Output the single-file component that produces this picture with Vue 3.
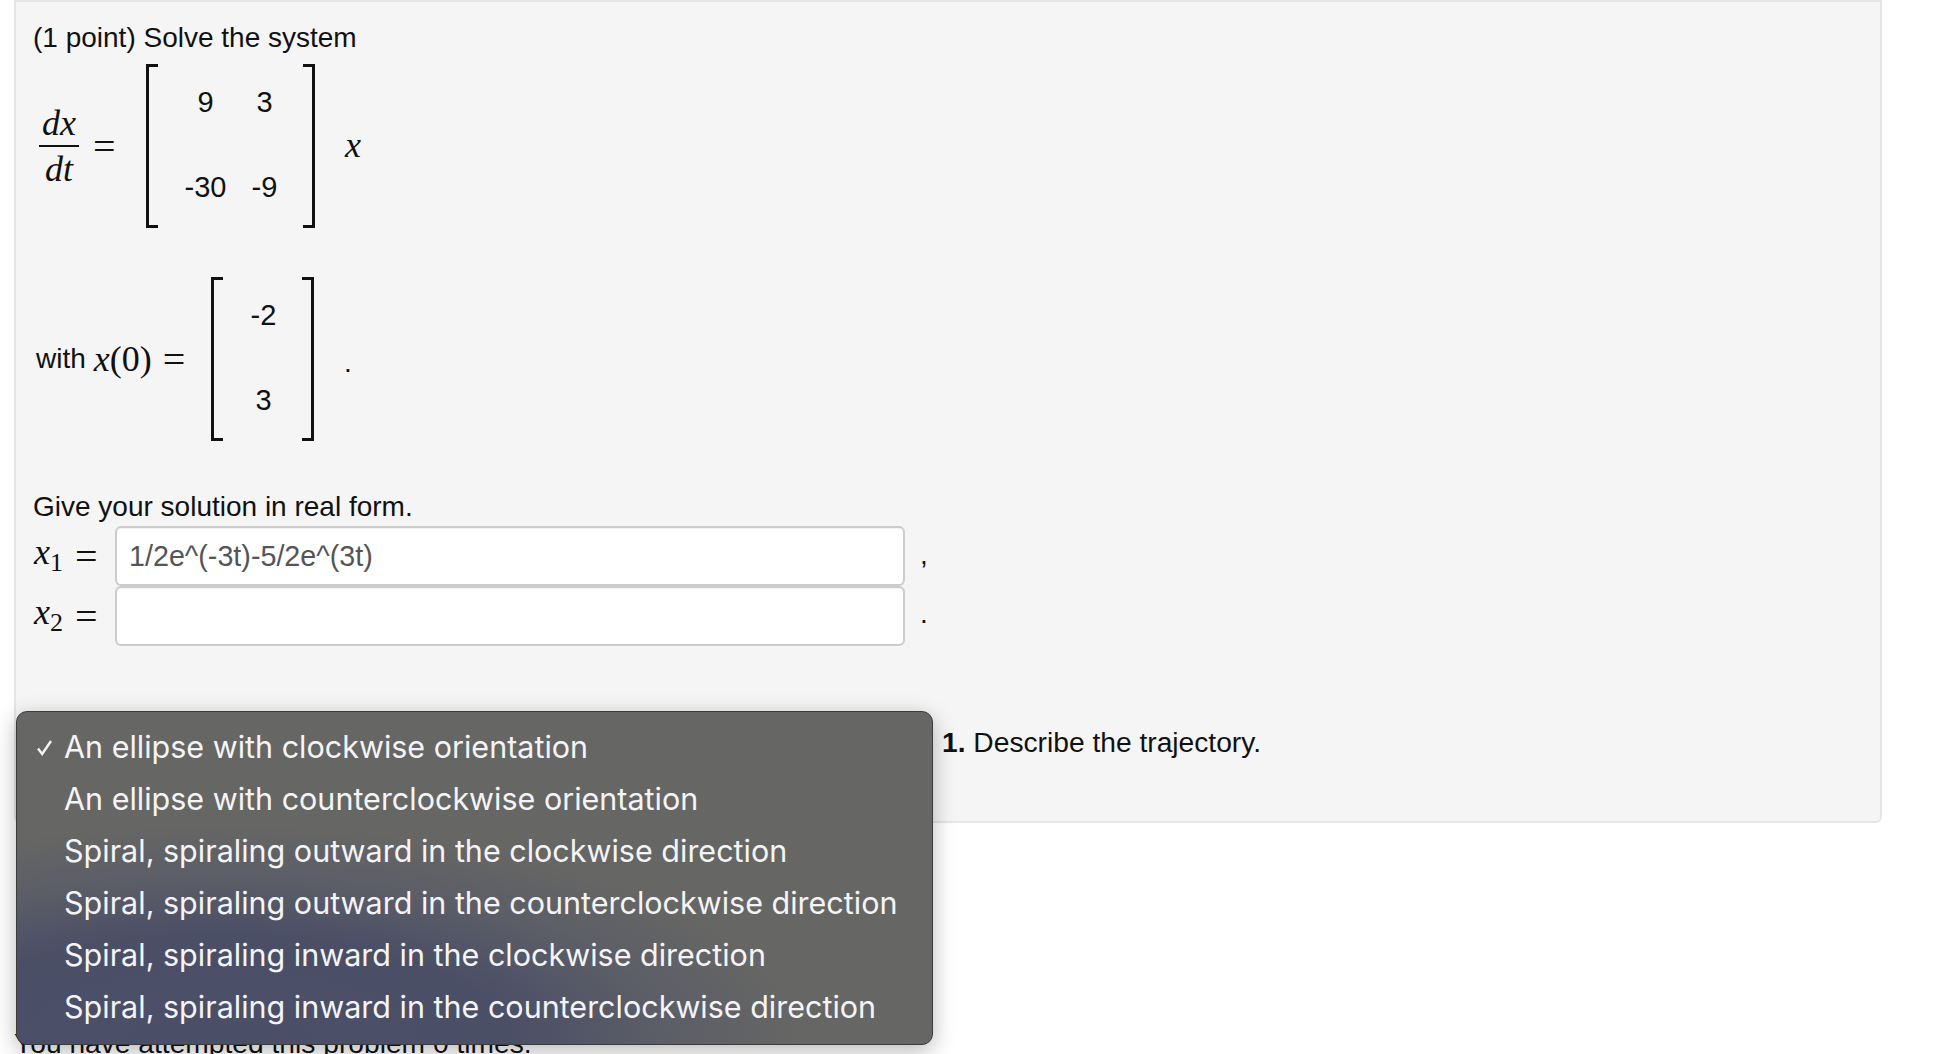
<script setup>
const options = [
  'An ellipse with clockwise orientation',
  'An ellipse with counterclockwise orientation',
  'Spiral, spiraling outward in the clockwise direction',
  'Spiral, spiraling outward in the counterclockwise direction',
  'Spiral, spiraling inward in the clockwise direction',
  'Spiral, spiraling inward in the counterclockwise direction'
]
</script>

<template>
  <div class="page">
    <section class="panel">
      <p class="title">(1 point) Solve the system</p>

      <div class="eq eq-one">
        <div class="frac">
          <span class="m num">dx</span>
          <span class="m den">dt</span>
        </div>
        <span class="m up big first-eq">=</span>
        <div class="matrix two">
          <span>9</span><span>3</span>
          <span>-30</span><span>-9</span>
        </div>
        <span class="m tail-x">x</span>
      </div>

      <div class="eq eq-two">
        <div class="with">
          <span class="with-word">with</span>
          <span class="m">x</span><span class="m up">(0)</span>
          <span class="m up big eq-gap">=</span>
        </div>
        <div class="matrix one">
          <span>-2</span>
          <span>3</span>
        </div>
        <span class="dot">.</span>
      </div>

      <p class="give">Give your solution in real form.</p>

      <div class="answer a1">
        <span class="lab"><span class="m">x</span><sub>1</sub></span>
        <span class="m up big lab-eq">=</span>
        <div class="field">1/2e^(-3t)-5/2e^(3t)</div>
        <span class="after comma">,</span>
      </div>
      <div class="answer">
        <span class="lab"><span class="m">x</span><sub>2</sub></span>
        <span class="m up big lab-eq">=</span>
        <div class="field"></div>
        <span class="after period">.</span>
      </div>

      <div class="describe">
        <div class="menu">
          <div v-for="(o, i) in options" :key="o" class="item">
            <span class="check">
              <svg v-if="i === 0" width="17" height="17" viewBox="0 0 17 17"><path d="M2 9.5 L6.2 15 L15 2" fill="none" stroke="#f4f4f6" stroke-width="2.4"/></svg>
            </span>{{ o }}
          </div>
        </div>
        <span class="desc"><b>1.</b> Describe the trajectory.</span>
      </div>
    </section>
    <p class="attempts">You have attempted this problem 0 times.</p>
  </div>
</template>

<style>
html, body { margin: 0; background: #fff; overflow: hidden; }
</style>

<style scoped>
.page {
  width: 1950px;
  height: 1054px;
  overflow: hidden;
  font-family: "Liberation Sans", Arial, sans-serif;
  font-size: 28px;
  color: #111;
}
.panel {
  box-sizing: border-box;
  width: 1868px;
  height: 823px;
  margin-left: 14px;
  padding: 0 0 0 18px;
  background: #f5f5f5;
  border: 2px solid #e6e6e6;
  border-radius: 0 0 6px 6px;
}
p { margin: 0; }
.title { padding-top: 20px; line-height: 32px; margin-left: -1px; }
.m { font-family: "Liberation Serif", "Times New Roman", serif; font-style: italic; font-size: 36px; }
.up { font-style: normal; }
.big { font-size: 40px; }
.eq { display: flex; align-items: center; }
.eq-one { height: 166px; margin-top: 9px; }
.frac { display: flex; flex-direction: column; align-items: center; width: 40px; margin-left: 5px; }
.num { line-height: 44px; border-bottom: 2px solid #111; width: 100%; text-align: center; }
.den { line-height: 44px; }
.first-eq { margin-left: 14px; width: 53px; }
.matrix {
  box-sizing: border-box;
  display: grid;
  align-items: center;
  justify-items: center;
  position: relative;
  height: 164px;
  width: 169px;
  padding-bottom: 2px;
  grid-auto-rows: 85px;
  align-content: center;
  font-size: 29px;
}
.matrix::before, .matrix::after {
  content: "";
  position: absolute;
  top: 0;
  bottom: 0;
  width: 9px;
  border: 3px solid #111;
}
.matrix::before { left: 0; border-right: 0; }
.matrix::after { right: 0; border-left: 0; }
.two { grid-template-columns: 59px 59px; justify-content: center; padding-left: 9px; }
.one { width: 103px; grid-template-columns: 59px; justify-content: end; padding-right: 21px; }
.tail-x { margin-left: 30px; margin-top: -2px; }
.eq-two { height: 164px; margin-top: 48px; }
.with { display: flex; align-items: center; width: 175px; margin-left: 2px; white-space: nowrap; }
.with-word { margin-right: 8px; }
.eq-gap { margin-left: 11px; }
.dot { margin-left: 30px; margin-top: 8px; }
.give { margin-top: 50px; line-height: 32px; margin-left: -1px; }
.answer { display: flex; align-items: center; height: 60px; position: relative; }
.a1 { margin-top: 3px; }
.lab { width: 41px; margin-top: -8px; white-space: nowrap; }
.lab sub { font-family: "Liberation Serif", serif; font-size: 26px; line-height: 0; vertical-align: -7px; }
.lab-eq { width: 40px; }
.field {
  box-sizing: border-box;
  width: 790px;
  height: 60px;
  padding: 0 12px;
  background: #fff;
  border: 2px solid #ccc;
  border-radius: 6px;
  box-shadow: inset 0 1px 1px rgba(0,0,0,.06);
  color: #555;
  font-size: 28.7px;
  line-height: 56px;
}
.after { margin-left: 15px; }
.comma { margin-top: -2px; }
.period { margin-top: -4px; }
.describe { display: flex; height: 100px; margin-top: 65px; position: relative; }
.desc { margin-left: 908px; margin-top: 15px; line-height: 32px; font-size: 28.2px; }
.desc b { font-weight: 700; }
.menu {
  position: absolute;
  left: -18px;
  top: 0;
  z-index: 2;
  box-sizing: border-box;
  width: 917px;
  height: 334px;
  padding-top: 9px;
  border: 1px solid #3c3c3c;
  border-radius: 11px;
  background:
    radial-gradient(ellipse 64% 66% at 22% 100%, #4a4e67 0%, #4b4f66 50%, rgba(90,92,104,.75) 78%, rgba(102,102,100,0) 100%),
    #666664;
  box-shadow: 0 6px 22px rgba(0,0,0,.28);
  color: #f4f4f6;
  font-family: Inter, "Noto Sans", sans-serif;
  font-size: 30.5px;
}
.item { display: flex; height: 52px; line-height: 52px; white-space: nowrap; }
.check { width: 47px; flex: none; display: flex; align-items: center; padding-left: 19px; box-sizing: border-box; }
.attempts { margin: 204px 0 0 14px; line-height: 32px; font-size: 28.2px; }
</style>
